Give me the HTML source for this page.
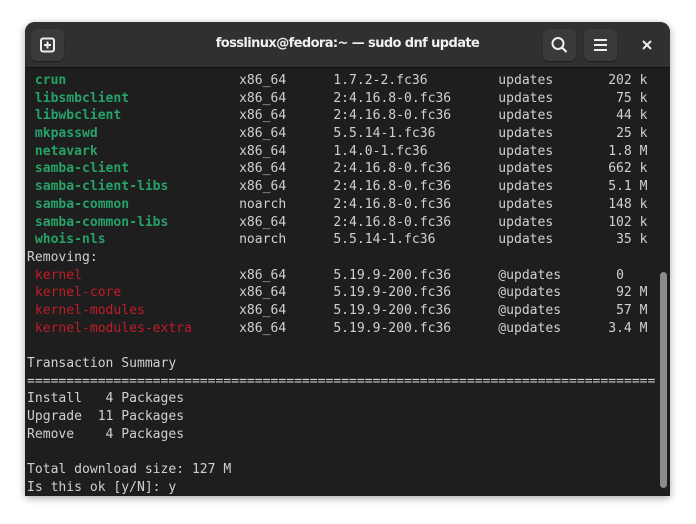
<!DOCTYPE html>
<html><head><meta charset="utf-8"><style>
html,body{margin:0;padding:0;width:696px;height:524px;background:#fff;overflow:hidden}
.win{position:absolute;left:25px;top:22px;width:645px;height:474px;background:#1e1e1e;border-radius:10px 10px 0 0;overflow:hidden;box-shadow:0 2px 8px rgba(0,0,0,.35)}
.hd{position:absolute;left:0;top:0;width:645px;height:45px;background:#303030;border-bottom:1px solid #111}
.btn{position:absolute;top:7px;width:33px;height:32px;background:#3a3a3a;border-radius:6px;box-shadow:0 1px 1px rgba(0,0,0,.4)}
.title{position:absolute;left:0;width:645px;top:14px;text-align:center;color:#f0f0f0;font:bold 13px "DejaVu Sans","Liberation Sans",sans-serif;letter-spacing:-.6px}
.term{position:absolute;left:2px;top:50px;font:13.05px/17.7px "DejaVu Sans Mono","Liberation Mono",monospace;color:#d0d0d0}
.term>div{white-space:pre;height:17.7px}
.r span{display:inline-block;white-space:pre}
.n{width:27ch}.a{width:12ch}.v{width:21ch}.p{width:7ch}.s{width:12ch;text-align:right}
.g{color:#26a269;font-weight:bold}.red{color:#c01c28}
.sb{position:absolute;left:635px;top:250px;width:7px;height:216px;background:#8c8c8c;border-radius:4px}
</style></head><body>
<div class="win">
<div class="hd">
 <div class="btn" style="left:6px"><svg width="33" height="32"><rect x="10" y="9.5" width="13" height="13" rx="2" fill="none" stroke="#eee" stroke-width="2"/><path d="M16.5 12.5v7M13 16h7" stroke="#eee" stroke-width="2"/></svg></div>
 <div class="title">fosslinux@fedora:~ — sudo dnf update</div>
 <div class="btn" style="left:518px"><svg width="33" height="32"><circle cx="15" cy="14.5" r="5.5" fill="none" stroke="#eee" stroke-width="2"/><path d="M19 18.5l4.5 4.5" stroke="#eee" stroke-width="2.2"/></svg></div>
 <div class="btn" style="left:559px"><svg width="33" height="32"><path d="M10 11h13M10 16h13M10 21h13" stroke="#eee" stroke-width="2"/></svg></div>
 <svg style="position:absolute;left:616px;top:17px" width="12" height="12"><path d="M2 2l8 8M10 2l-8 8" stroke="#eee" stroke-width="2"/></svg>
</div>
<div class="term"><div class="r"><span class="n g"> crun</span><span class="a">x86_64</span><span class="v">1.7.2-2.fc36</span><span class="p">updates</span><span class="s">202 k</span></div><div class="r"><span class="n g"> libsmbclient</span><span class="a">x86_64</span><span class="v">2:4.16.8-0.fc36</span><span class="p">updates</span><span class="s">75 k</span></div><div class="r"><span class="n g"> libwbclient</span><span class="a">x86_64</span><span class="v">2:4.16.8-0.fc36</span><span class="p">updates</span><span class="s">44 k</span></div><div class="r"><span class="n g"> mkpasswd</span><span class="a">x86_64</span><span class="v">5.5.14-1.fc36</span><span class="p">updates</span><span class="s">25 k</span></div><div class="r"><span class="n g"> netavark</span><span class="a">x86_64</span><span class="v">1.4.0-1.fc36</span><span class="p">updates</span><span class="s">1.8 M</span></div><div class="r"><span class="n g"> samba-client</span><span class="a">x86_64</span><span class="v">2:4.16.8-0.fc36</span><span class="p">updates</span><span class="s">662 k</span></div><div class="r"><span class="n g"> samba-client-libs</span><span class="a">x86_64</span><span class="v">2:4.16.8-0.fc36</span><span class="p">updates</span><span class="s">5.1 M</span></div><div class="r"><span class="n g"> samba-common</span><span class="a">noarch</span><span class="v">2:4.16.8-0.fc36</span><span class="p">updates</span><span class="s">148 k</span></div><div class="r"><span class="n g"> samba-common-libs</span><span class="a">x86_64</span><span class="v">2:4.16.8-0.fc36</span><span class="p">updates</span><span class="s">102 k</span></div><div class="r"><span class="n g"> whois-nls</span><span class="a">noarch</span><span class="v">5.5.14-1.fc36</span><span class="p">updates</span><span class="s">35 k</span></div><div>Removing:</div><div class="r"><span class="n red"> kernel</span><span class="a">x86_64</span><span class="v">5.19.9-200.fc36</span><span class="p">@updates</span><span class="s">0   </span></div><div class="r"><span class="n red"> kernel-core</span><span class="a">x86_64</span><span class="v">5.19.9-200.fc36</span><span class="p">@updates</span><span class="s">92 M</span></div><div class="r"><span class="n red"> kernel-modules</span><span class="a">x86_64</span><span class="v">5.19.9-200.fc36</span><span class="p">@updates</span><span class="s">57 M</span></div><div class="r"><span class="n red"> kernel-modules-extra</span><span class="a">x86_64</span><span class="v">5.19.9-200.fc36</span><span class="p">@updates</span><span class="s">3.4 M</span></div><div> </div><div>Transaction Summary</div><div>================================================================================</div><div>Install   4 Packages</div><div>Upgrade  11 Packages</div><div>Remove    4 Packages</div><div> </div><div>Total download size: 127 M</div><div>Is this ok [y/N]: y</div></div>
<div class="sb"></div>
</div>
</body></html>
